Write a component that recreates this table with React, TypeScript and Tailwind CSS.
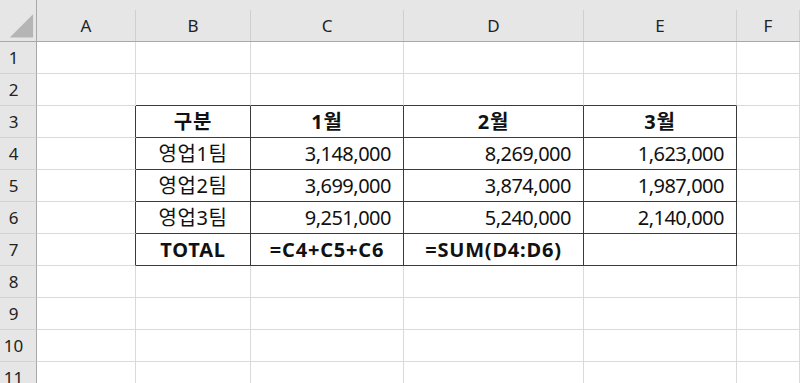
const COLS = ["A", "B", "C", "D", "E", "F"];

type Cell = { text: string; align?: "left" | "center" | "right"; bold?: boolean };

// rows 3..7 hold the bordered table in B..E
const table: Record<number, Cell[]> = {
  3: [
    { text: "구분", align: "center", bold: true },
    { text: "1월", align: "center", bold: true },
    { text: "2월", align: "center", bold: true },
    { text: "3월", align: "center", bold: true },
  ],
  4: [
    { text: "영업1팀", align: "center" },
    { text: "3,148,000", align: "right" },
    { text: "8,269,000", align: "right" },
    { text: "1,623,000", align: "right" },
  ],
  5: [
    { text: "영업2팀", align: "center" },
    { text: "3,699,000", align: "right" },
    { text: "3,874,000", align: "right" },
    { text: "1,987,000", align: "right" },
  ],
  6: [
    { text: "영업3팀", align: "center" },
    { text: "9,251,000", align: "right" },
    { text: "5,240,000", align: "right" },
    { text: "2,140,000", align: "right" },
  ],
  7: [
    { text: "TOTAL", align: "center", bold: true },
    { text: "=C4+C5+C6", align: "center", bold: true },
    { text: "=SUM(D4:D6)", align: "center", bold: true },
    { text: "", align: "center" },
  ],
};

const ROWS = Array.from({ length: 11 }, (_, i) => i + 1);

function inTable(row: number, col: number) {
  return row >= 3 && row <= 7 && col >= 1 && col <= 4;
}

function DataCell({ row, col }: { row: number; col: number }) {
  // a cell owns its right and bottom edge; the table edges go dark
  const darkRight = row >= 3 && row <= 7 && col >= 0 && col <= 4;
  const darkBottom = col >= 1 && col <= 4 && row >= 2 && row <= 7;
  const cell = inTable(row, col) ? table[row][col - 1] : null;

  let align = "justify-start";
  if (cell?.align === "right") align = "justify-end pr-[12px] tracking-[-0.5px]";
  else if (cell?.align === "center") align = cell.bold ? "justify-center tracking-[0.8px]" : "justify-center tracking-[0.6px]";

  return (
    <div
      className={`flex h-[32px] items-center border-r border-b text-[20px] text-[#111] ${align} ${
        darkRight ? "border-r-[#3a3a3a]" : "border-r-[#dadada]"
      } ${darkBottom ? "border-b-[#3a3a3a]" : "border-b-[#dadada]"} ${cell?.bold ? "font-bold" : "font-normal"}`}
    >
      {cell?.text}
    </div>
  );
}

export default function App() {
  return (
    <div
      className="h-[383px] w-[800px] overflow-hidden bg-white"
      style={{ fontFamily: '"Noto Sans", "Noto Sans CJK KR", sans-serif' }}
    >
      <div className="grid grid-cols-[37px_99px_115px_153px_180px_153px_63px]">
        {/* corner select-all */}
        <div className="flex h-[42px] items-end border-r border-b border-r-[#a8a8a8] border-b-[#a8a8a8] bg-[#e6e6e6]">
          <svg width="37" height="41" viewBox="0 0 37 41">
            <polygon points="10,38 34,14 34,38" fill="#b5b5b5" />
          </svg>
        </div>
        {COLS.map((c) => (
          <div key={c} className="flex h-[42px] flex-col border-b border-b-[#a8a8a8] bg-[#e6e6e6]">
            <div className="h-[10px]" />
            <div className="flex flex-1 items-center justify-center border-r border-r-[#cfcfcf] text-[17px] text-[#222]">
              {c}
            </div>
          </div>
        ))}

        {ROWS.map((r) => (
          <div key={`r${r}`} className="contents">
            <div className="flex h-[32px] items-center justify-center border-r border-b border-r-[#a8a8a8] border-b-[#d2d2d2] bg-[#e6e6e6] pr-[9px] text-[17px] text-[#222]">
              {r}
            </div>
            {COLS.map((_, ci) => (
              <DataCell key={`${r}-${ci}`} row={r} col={ci} />
            ))}
          </div>
        ))}
      </div>
    </div>
  );
}
